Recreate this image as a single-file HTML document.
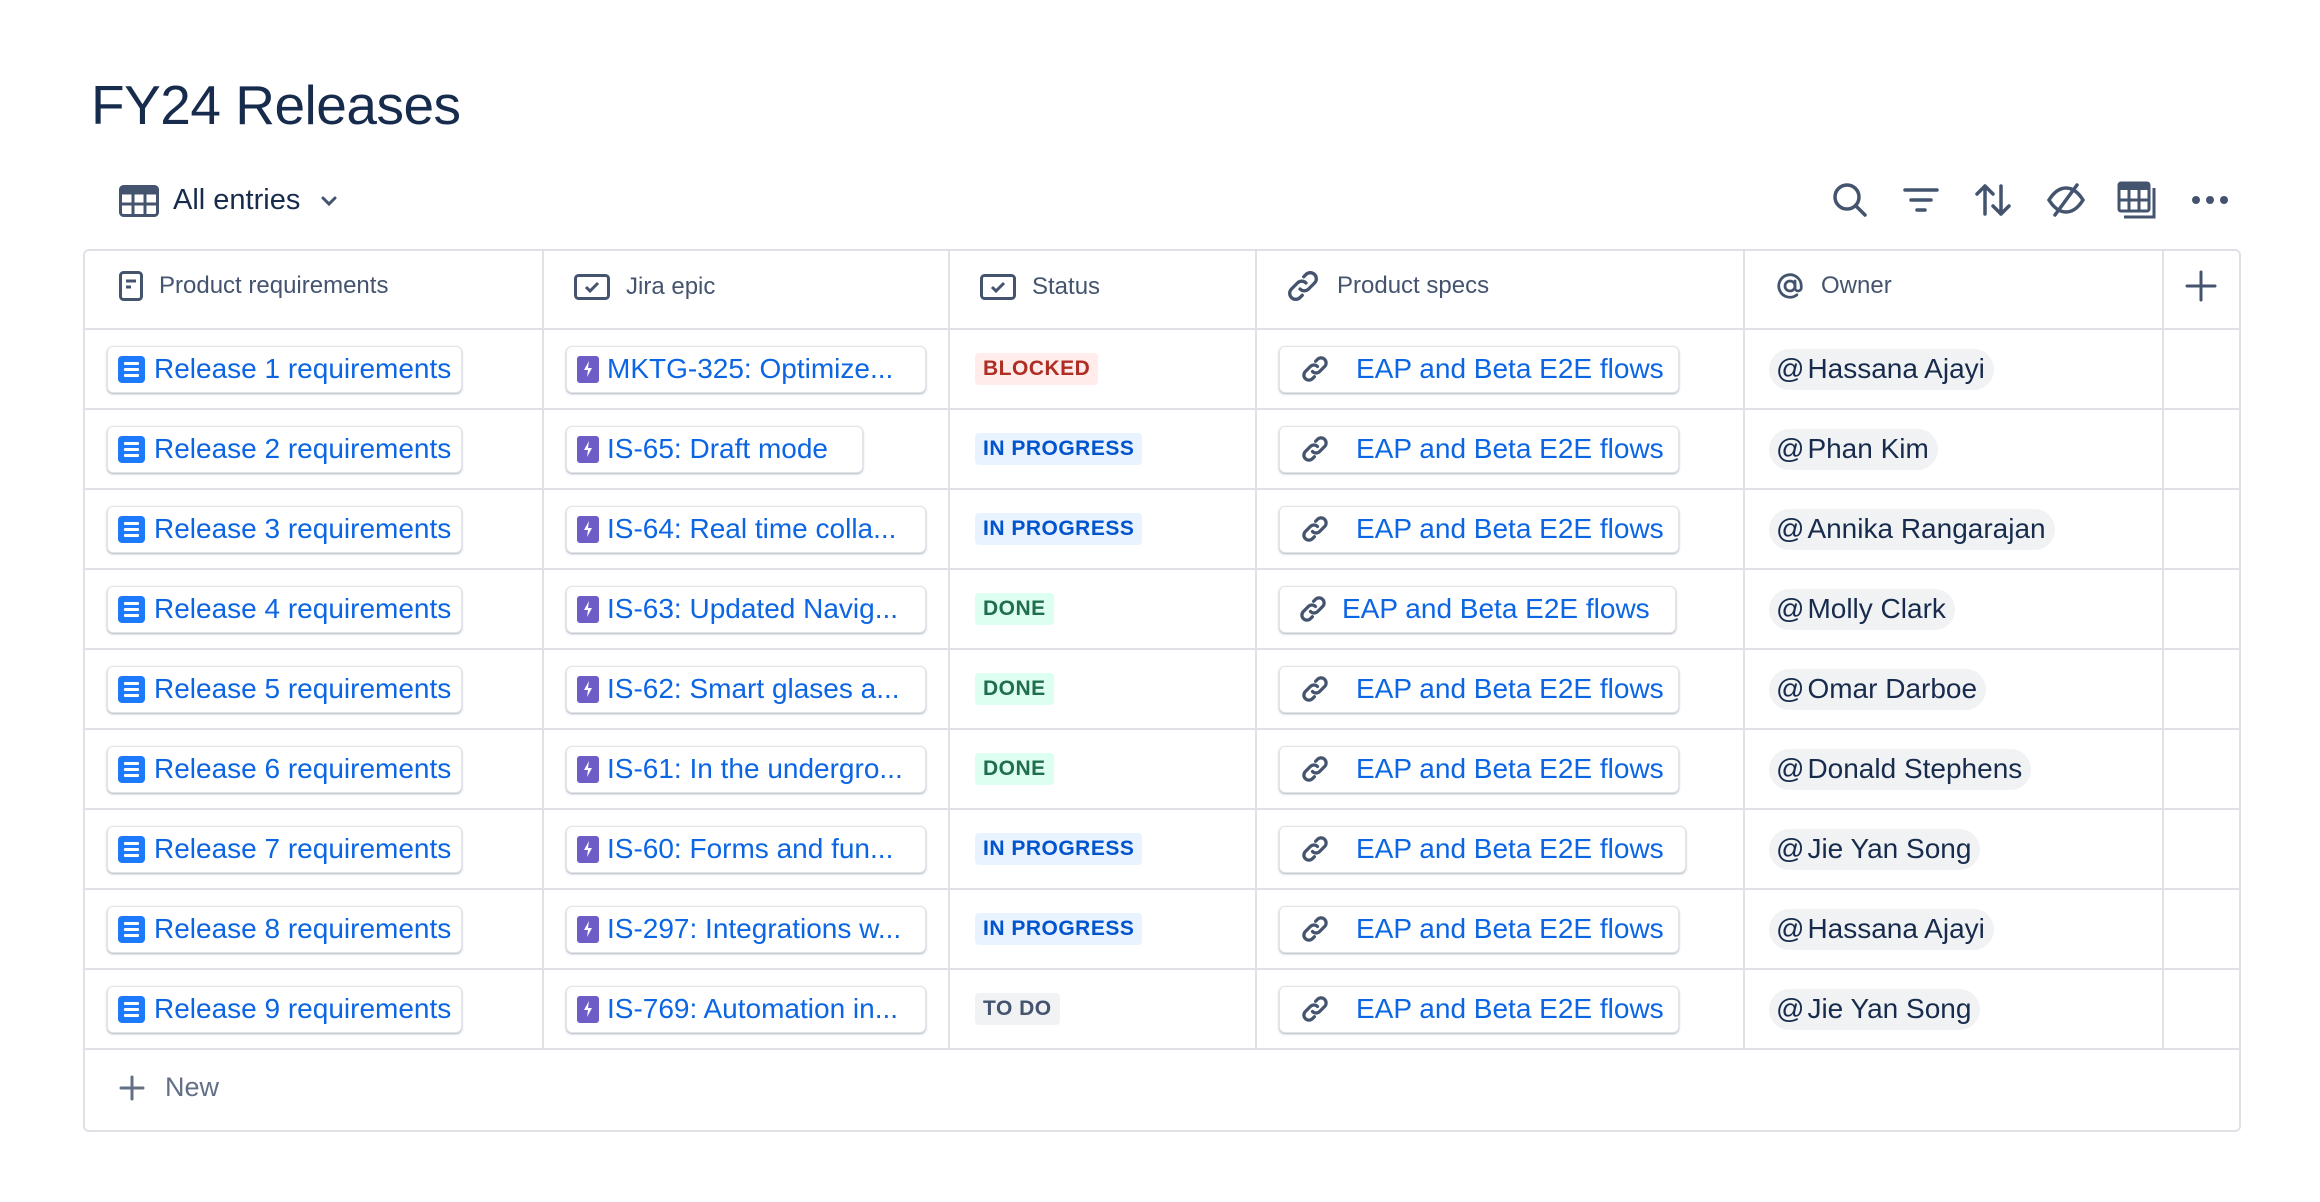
<!DOCTYPE html>
<html><head><meta charset="utf-8"><style>
*{box-sizing:border-box;margin:0;padding:0}
body{width:2320px;height:1202px;background:#fff;font-family:"Liberation Sans",sans-serif;position:relative;overflow:hidden;color:#172b4d}
h1{position:absolute;left:91px;top:73px;font-size:55px;font-weight:400;color:#172b4d;letter-spacing:-0.5px}
.ae{position:absolute;left:119px;top:184px;display:flex;align-items:center;font-size:29px;color:#172b4d}
.tb{position:absolute;top:180px;width:40px;height:40px}
table{position:absolute;left:83px;top:249px;border-collapse:separate;border-spacing:0;border:2px solid #dfe1e6;border-radius:6px;table-layout:fixed}
td,th{border-right:2px solid #dfe1e6;border-bottom:2px solid #dfe1e6;vertical-align:middle;text-align:left;font-weight:400;white-space:nowrap;overflow:hidden}
td:last-child,th:last-child{border-right:none}
tr.last td{border-bottom:none}
th{height:79px;font-size:24px;color:#44546f;padding-left:34px}
th span.h{display:inline-flex;align-items:center;gap:16px}
td{height:80px;padding-left:22px}
.chip{display:inline-flex;align-items:center;height:47px;padding:0 10px;border:1px solid #e2e4e9;border-radius:6px;box-shadow:0 1px 2px rgba(9,30,66,.35);font-size:28px;color:#0c66e4;background:#fff}
.ri{width:27px;height:27px;background:#1d7afc;border-radius:4px;margin-right:9px;position:relative;flex:none}
.ri:before{content:"";position:absolute;left:6px;top:6px;width:15px;height:3px;background:#fff;border-radius:1px;box-shadow:0 6px 0 #fff,0 12px 0 #fff}
.ji{width:22px;height:27px;background:#6e5dc6;border-radius:3px;margin-right:8px;flex:none;display:flex;align-items:center;justify-content:center}
.loz{display:inline-block;font-size:21px;font-weight:700;padding:4px 8px;border-radius:4px;letter-spacing:.5px}
.bl{background:#ffeceb;color:#ae2e24}.ip{background:#e9f2ff;color:#0055cc}.dn{background:#dcfff1;color:#216e4e}.td{background:#f1f2f4;color:#44546f}
.own{display:inline-flex;align-items:center;height:41px;padding:0 9px 0 7px;border-radius:21px;background:#f1f2f4;font-size:28px;color:#172b4d}
.own b{font-weight:400;margin-right:3px}
.sp{padding-left:20px;padding-right:10px}
.sp svg{margin-right:26px}
</style></head><body>
<h1>FY24 Releases</h1>
<div class="ae"><svg width="40" height="32" viewBox="0 0 40 32"><rect x="1.5" y="1.5" width="37" height="29" rx="3" fill="none" stroke="#44546f" stroke-width="3"/><rect x="1.5" y="1.5" width="37" height="8" fill="#44546f"/><path d="M14 2v28M26 2v28M2 19h36" stroke="#44546f" stroke-width="3"/></svg><span style="margin-left:14px">All entries</span><svg style="margin-left:20px" width="18" height="12" viewBox="0 0 18 12"><path d="M3 3l6 6 6-6" fill="none" stroke="#44546f" stroke-width="3" stroke-linecap="round"/></svg></div>

<svg class="tb" style="left:1830px" viewBox="0 0 40 40"><circle cx="17" cy="17" r="12" fill="none" stroke="#44546f" stroke-width="3.5"/><path d="M26 26l9 9" stroke="#44546f" stroke-width="3.5" stroke-linecap="round"/></svg>
<svg class="tb" style="left:1901px" viewBox="0 0 40 40"><path d="M4 10h32M10 20h20M16 30h8" stroke="#44546f" stroke-width="3.5" stroke-linecap="round"/></svg>
<svg class="tb" style="left:1973px" viewBox="0 0 40 40"><path d="M12 34V6M4 14l8-8 8 8M28 6v28M20 26l8 8 8-8" fill="none" stroke="#44546f" stroke-width="3.5" stroke-linecap="round" stroke-linejoin="round"/></svg>
<svg class="tb" style="left:2046px" viewBox="0 0 40 40"><path d="M3 20c5-8 11-12 17-12s12 4 17 12c-5 8-11 12-17 12S8 28 3 20z" fill="none" stroke="#44546f" stroke-width="3.5"/><path d="M31 5L9 35" stroke="#44546f" stroke-width="3.5" stroke-linecap="round"/></svg>
<svg class="tb" style="left:2117px" viewBox="0 0 40 40"><rect x="2" y="3" width="30" height="28" rx="2" fill="none" stroke="#44546f" stroke-width="3"/><rect x="2" y="3" width="30" height="7" fill="#44546f"/><path d="M12 4v26M22 4v26M3 20h28" stroke="#44546f" stroke-width="3"/><path d="M37 8v29H7" fill="none" stroke="#44546f" stroke-width="3"/></svg>
<svg class="tb" style="left:2190px" viewBox="0 0 40 40"><circle cx="6" cy="20" r="4" fill="#44546f"/><circle cx="20" cy="20" r="4" fill="#44546f"/><circle cx="34" cy="20" r="4" fill="#44546f"/></svg>

<table>
<colgroup><col style="width:459px"><col style="width:406px"><col style="width:307px"><col style="width:488px"><col style="width:419px"><col style="width:75px"></colgroup>
<tr>
<th><span class="h"><svg width="24" height="30" viewBox="0 0 24 30"><rect x="1.5" y="1.5" width="21" height="27" rx="3" fill="none" stroke="#44546f" stroke-width="3"/><path d="M7 10h10M7 16h5" stroke="#44546f" stroke-width="3"/></svg>Product requirements</span></th>
<th style="padding-left:30px"><span class="h"><svg width="36" height="26" viewBox="0 0 36 26"><rect x="1.5" y="1.5" width="33" height="23" rx="3" fill="none" stroke="#44546f" stroke-width="3"/><path d="M12 13l4 4 8-8" fill="none" stroke="#44546f" stroke-width="3"/></svg>Jira epic</span></th>
<th style="padding-left:30px"><span class="h"><svg width="36" height="26" viewBox="0 0 36 26"><rect x="1.5" y="1.5" width="33" height="23" rx="3" fill="none" stroke="#44546f" stroke-width="3"/><path d="M12 13l4 4 8-8" fill="none" stroke="#44546f" stroke-width="3"/></svg>Status</span></th>
<th style="padding-left:28px"><span class="h"><svg width="36" height="36" viewBox="0 0 24 24"><path d="M10 14a4 4 0 0 0 5.7 0l4-4a4 4 0 0 0-5.7-5.7l-1.5 1.5M14 10a4 4 0 0 0-5.7 0l-4 4a4 4 0 0 0 5.7 5.7l1.5-1.5" fill="none" stroke="#44546f" stroke-width="2.2" stroke-linecap="round"/></svg>Product specs</span></th>
<th style="padding-left:30px"><span class="h"><svg width="30" height="32" viewBox="0 0 24 24"><circle cx="12" cy="12" r="4" fill="none" stroke="#44546f" stroke-width="2.2"/><path d="M16 8v5.5a2.5 2.5 0 0 0 5 0V12a9 9 0 1 0-3.5 7.1" fill="none" stroke="#44546f" stroke-width="2.2" stroke-linecap="round"/></svg>Owner</span></th>
<th style="padding-left:20px"><svg width="34" height="34" viewBox="0 0 34 34"><path d="M17 3v28M3 17h28" stroke="#44546f" stroke-width="3" stroke-linecap="round"/></svg></th>
</tr>
<tr><td><span class="chip"><span class="ri"></span>Release 1 requirements</span></td><td><span class="chip" style="width:360px"><span class="ji"><svg width="12" height="18" viewBox="0 0 12 18"><path d="M7 1L2 10h4l-1 7 5-9H6z" fill="#fff"/></svg></span>MKTG-325: Optimize...</span></td><td style="padding-left:25px"><span class="loz bl">BLOCKED</span></td><td><span class="chip sp" style="width:400px"><svg width="30" height="30" viewBox="0 0 24 24"><path d="M10 14a4 4 0 0 0 5.7 0l4-4a4 4 0 0 0-5.7-5.7l-1.5 1.5M14 10a4 4 0 0 0-5.7 0l-4 4a4 4 0 0 0 5.7 5.7l1.5-1.5" fill="none" stroke="#44546f" stroke-width="2.6" stroke-linecap="round"/></svg>EAP and Beta E2E flows</span></td><td style="padding-left:24px"><span class="own"><b>@</b>Hassana Ajayi</span></td><td></td></tr>
<tr><td><span class="chip"><span class="ri"></span>Release 2 requirements</span></td><td><span class="chip" style="width:297px"><span class="ji"><svg width="12" height="18" viewBox="0 0 12 18"><path d="M7 1L2 10h4l-1 7 5-9H6z" fill="#fff"/></svg></span>IS-65: Draft mode</span></td><td style="padding-left:25px"><span class="loz ip">IN PROGRESS</span></td><td><span class="chip sp" style="width:400px"><svg width="30" height="30" viewBox="0 0 24 24"><path d="M10 14a4 4 0 0 0 5.7 0l4-4a4 4 0 0 0-5.7-5.7l-1.5 1.5M14 10a4 4 0 0 0-5.7 0l-4 4a4 4 0 0 0 5.7 5.7l1.5-1.5" fill="none" stroke="#44546f" stroke-width="2.6" stroke-linecap="round"/></svg>EAP and Beta E2E flows</span></td><td style="padding-left:24px"><span class="own"><b>@</b>Phan Kim</span></td><td></td></tr>
<tr><td><span class="chip"><span class="ri"></span>Release 3 requirements</span></td><td><span class="chip" style="width:360px"><span class="ji"><svg width="12" height="18" viewBox="0 0 12 18"><path d="M7 1L2 10h4l-1 7 5-9H6z" fill="#fff"/></svg></span>IS-64: Real time colla...</span></td><td style="padding-left:25px"><span class="loz ip">IN PROGRESS</span></td><td><span class="chip sp" style="width:400px"><svg width="30" height="30" viewBox="0 0 24 24"><path d="M10 14a4 4 0 0 0 5.7 0l4-4a4 4 0 0 0-5.7-5.7l-1.5 1.5M14 10a4 4 0 0 0-5.7 0l-4 4a4 4 0 0 0 5.7 5.7l1.5-1.5" fill="none" stroke="#44546f" stroke-width="2.6" stroke-linecap="round"/></svg>EAP and Beta E2E flows</span></td><td style="padding-left:24px"><span class="own"><b>@</b>Annika Rangarajan</span></td><td></td></tr>
<tr><td><span class="chip"><span class="ri"></span>Release 4 requirements</span></td><td><span class="chip" style="width:360px"><span class="ji"><svg width="12" height="18" viewBox="0 0 12 18"><path d="M7 1L2 10h4l-1 7 5-9H6z" fill="#fff"/></svg></span>IS-63: Updated Navig...</span></td><td style="padding-left:25px"><span class="loz dn">DONE</span></td><td><span class="chip sp" style="width:397px;padding-left:18px"><svg width="30" height="30" viewBox="0 0 24 24" style="margin-right:14px"><path d="M10 14a4 4 0 0 0 5.7 0l4-4a4 4 0 0 0-5.7-5.7l-1.5 1.5M14 10a4 4 0 0 0-5.7 0l-4 4a4 4 0 0 0 5.7 5.7l1.5-1.5" fill="none" stroke="#44546f" stroke-width="2.6" stroke-linecap="round"/></svg>EAP and Beta E2E flows</span></td><td style="padding-left:24px"><span class="own"><b>@</b>Molly Clark</span></td><td></td></tr>
<tr><td><span class="chip"><span class="ri"></span>Release 5 requirements</span></td><td><span class="chip" style="width:360px"><span class="ji"><svg width="12" height="18" viewBox="0 0 12 18"><path d="M7 1L2 10h4l-1 7 5-9H6z" fill="#fff"/></svg></span>IS-62: Smart glases a...</span></td><td style="padding-left:25px"><span class="loz dn">DONE</span></td><td><span class="chip sp" style="width:400px"><svg width="30" height="30" viewBox="0 0 24 24"><path d="M10 14a4 4 0 0 0 5.7 0l4-4a4 4 0 0 0-5.7-5.7l-1.5 1.5M14 10a4 4 0 0 0-5.7 0l-4 4a4 4 0 0 0 5.7 5.7l1.5-1.5" fill="none" stroke="#44546f" stroke-width="2.6" stroke-linecap="round"/></svg>EAP and Beta E2E flows</span></td><td style="padding-left:24px"><span class="own"><b>@</b>Omar Darboe</span></td><td></td></tr>
<tr><td><span class="chip"><span class="ri"></span>Release 6 requirements</span></td><td><span class="chip" style="width:360px"><span class="ji"><svg width="12" height="18" viewBox="0 0 12 18"><path d="M7 1L2 10h4l-1 7 5-9H6z" fill="#fff"/></svg></span>IS-61: In the undergro...</span></td><td style="padding-left:25px"><span class="loz dn">DONE</span></td><td><span class="chip sp" style="width:400px"><svg width="30" height="30" viewBox="0 0 24 24"><path d="M10 14a4 4 0 0 0 5.7 0l4-4a4 4 0 0 0-5.7-5.7l-1.5 1.5M14 10a4 4 0 0 0-5.7 0l-4 4a4 4 0 0 0 5.7 5.7l1.5-1.5" fill="none" stroke="#44546f" stroke-width="2.6" stroke-linecap="round"/></svg>EAP and Beta E2E flows</span></td><td style="padding-left:24px"><span class="own"><b>@</b>Donald Stephens</span></td><td></td></tr>
<tr><td><span class="chip"><span class="ri"></span>Release 7 requirements</span></td><td><span class="chip" style="width:360px"><span class="ji"><svg width="12" height="18" viewBox="0 0 12 18"><path d="M7 1L2 10h4l-1 7 5-9H6z" fill="#fff"/></svg></span>IS-60: Forms and fun...</span></td><td style="padding-left:25px"><span class="loz ip">IN PROGRESS</span></td><td><span class="chip sp" style="width:407px"><svg width="30" height="30" viewBox="0 0 24 24"><path d="M10 14a4 4 0 0 0 5.7 0l4-4a4 4 0 0 0-5.7-5.7l-1.5 1.5M14 10a4 4 0 0 0-5.7 0l-4 4a4 4 0 0 0 5.7 5.7l1.5-1.5" fill="none" stroke="#44546f" stroke-width="2.6" stroke-linecap="round"/></svg>EAP and Beta E2E flows</span></td><td style="padding-left:24px"><span class="own"><b>@</b>Jie Yan Song</span></td><td></td></tr>
<tr><td><span class="chip"><span class="ri"></span>Release 8 requirements</span></td><td><span class="chip" style="width:360px"><span class="ji"><svg width="12" height="18" viewBox="0 0 12 18"><path d="M7 1L2 10h4l-1 7 5-9H6z" fill="#fff"/></svg></span>IS-297: Integrations w...</span></td><td style="padding-left:25px"><span class="loz ip">IN PROGRESS</span></td><td><span class="chip sp" style="width:400px"><svg width="30" height="30" viewBox="0 0 24 24"><path d="M10 14a4 4 0 0 0 5.7 0l4-4a4 4 0 0 0-5.7-5.7l-1.5 1.5M14 10a4 4 0 0 0-5.7 0l-4 4a4 4 0 0 0 5.7 5.7l1.5-1.5" fill="none" stroke="#44546f" stroke-width="2.6" stroke-linecap="round"/></svg>EAP and Beta E2E flows</span></td><td style="padding-left:24px"><span class="own"><b>@</b>Hassana Ajayi</span></td><td></td></tr>
<tr><td><span class="chip"><span class="ri"></span>Release 9 requirements</span></td><td><span class="chip" style="width:360px"><span class="ji"><svg width="12" height="18" viewBox="0 0 12 18"><path d="M7 1L2 10h4l-1 7 5-9H6z" fill="#fff"/></svg></span>IS-769: Automation in...</span></td><td style="padding-left:25px"><span class="loz td">TO DO</span></td><td><span class="chip sp" style="width:400px"><svg width="30" height="30" viewBox="0 0 24 24"><path d="M10 14a4 4 0 0 0 5.7 0l4-4a4 4 0 0 0-5.7-5.7l-1.5 1.5M14 10a4 4 0 0 0-5.7 0l-4 4a4 4 0 0 0 5.7 5.7l1.5-1.5" fill="none" stroke="#44546f" stroke-width="2.6" stroke-linecap="round"/></svg>EAP and Beta E2E flows</span></td><td style="padding-left:24px"><span class="own"><b>@</b>Jie Yan Song</span></td><td></td></tr>
<tr class="last"><td colspan="6" style="height:80px;padding-left:34px;font-size:27px;color:#626f86"><span style="display:inline-flex;align-items:center;gap:20px"><svg width="26" height="26" viewBox="0 0 26 26"><path d="M13 2v22M2 13h22" stroke="#626f86" stroke-width="3" stroke-linecap="round"/></svg>New</span></td></tr>
</table>
</body></html>
